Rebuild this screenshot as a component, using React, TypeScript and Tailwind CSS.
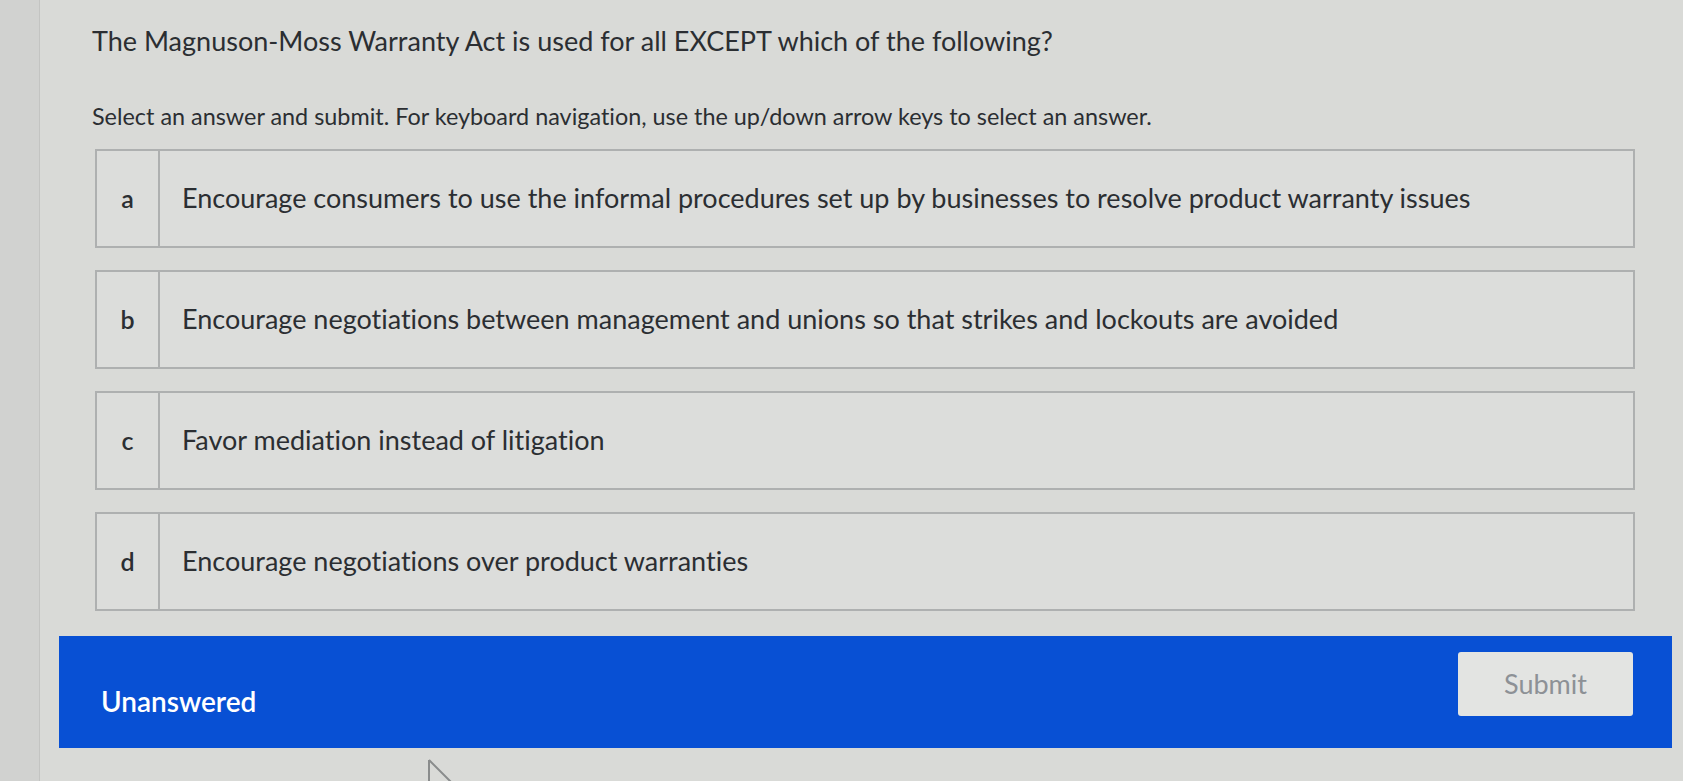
import React from "react";

const options = [
  { letter: "a", text: "Encourage consumers to use the informal procedures set up by businesses to resolve product warranty issues" },
  { letter: "b", text: "Encourage negotiations between management and unions so that strikes and lockouts are avoided" },
  { letter: "c", text: "Favor mediation instead of litigation" },
  { letter: "d", text: "Encourage negotiations over product warranties" },
];

export default function App() {
  return (
    <div
      className="relative flex w-[1683px] h-[781px] overflow-hidden bg-[#d9dad7] text-[#2b2e32] [font-variant-ligatures:none]"
      style={{ fontFamily: "Lato, 'Noto Sans', sans-serif" }}
    >
      <div className="w-[40px] shrink-0 bg-[#d1d2d0] border-r border-[#c3c4c2]" />
      <div className="flex flex-1 flex-col">
        <h1 className="pl-[52px] pt-[24px] text-[27px] leading-[34px] font-normal">
          The Magnuson-Moss Warranty Act is used for all EXCEPT which of the following?
        </h1>
        <p className="pl-[52px] mt-[44px] text-[23.4px] leading-[28px]">
          Select an answer and submit. For keyboard navigation, use the up/down arrow keys to select an answer.
        </p>
        <div className="mt-[19px] ml-[55px] w-[1540px] flex flex-col gap-[22px]">
          {options.map((o) => (
            <div
              key={o.letter}
              className="flex h-[99px] border-2 border-[#aeb0b0] bg-[#dcdddb]"
            >
              <div className="w-[63px] shrink-0 flex items-center justify-center border-r-2 border-[#aeb0b0] text-[25px] font-semibold">
                {o.letter}
              </div>
              <div className="flex items-center pl-[22px] text-[27px]">{o.text}</div>
            </div>
          ))}
        </div>
        <div className="mt-[25px] ml-[19px] mr-[11px] h-[112px] bg-[#0850d4] flex justify-between items-start pt-[16px] pl-[42px] pr-[39px]">
          <div className="mt-[33px] text-[28px] leading-[32px] font-semibold text-white">Unanswered</div>
          <button className="w-[175px] h-[64px] rounded-[3px] bg-[#e3e4e2] text-[#8d9196] text-[27px] flex items-center justify-center">
            Submit
          </button>
        </div>
      </div>
      <svg
        className="absolute left-[427px] top-[758px]"
        width="32"
        height="30"
        viewBox="0 0 32 30"
        fill="none"
      >
        <path d="M2 2 L2 30 M2 2 L26 26" stroke="#8a8c8c" strokeWidth="2" />
      </svg>
    </div>
  );
}
